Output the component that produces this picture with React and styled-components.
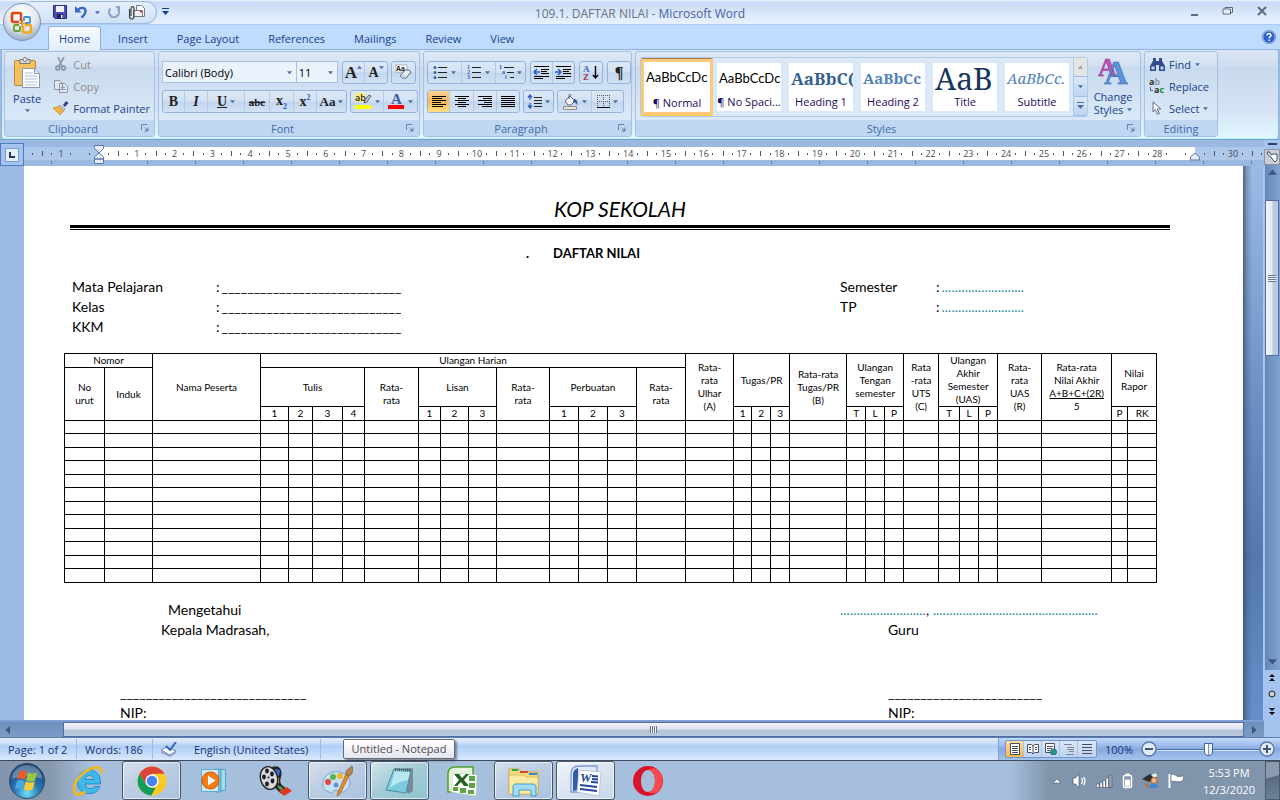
import React, {useState} from 'react';
import styled, {createGlobalStyle} from 'styled-components';

const GlobalStyle = createGlobalStyle`
  *{
    box-sizing: border-box;
    margin: 0;
    padding: 0;
  }

  body{
    font-family: "Open Sans", "Noto Sans", sans-serif;
    font-size: 11px;
    color: #15428b;
    background: #9bbbe3;
  }

  button, select, input{
    font: inherit;
    color: inherit;
    background: none;
    border: 0;
  }

  svg{
    display: block;
    flex: none;
  }
`;

const Window = styled.div`
  height: 100vh;
  display: flex;
  flex-direction: column;
  overflow: hidden;
`;

/* title bar and tabs */

const TitleBar = styled.header`
  height: 25px;
  flex: none;
  display: grid;
  grid-template-columns: 1fr auto 1fr;
  align-items: center;
  background: linear-gradient(#f2f7fe 0, #c9ddf7 2px, #d3e3f9 10px, #dbe9fc 14px, #e9f2fe 24px);
  border-bottom: 1px solid #a9cbf5;

  h1{
    font-size: 12px;
    font-weight: 400;
    color: #4a5fa0;
    padding-top: 2px;

    span{
      color: #6c737c;
    }
  }
`;

const QuickAccess = styled.div`
  display: flex;
  align-items: center;
  padding-left: 30px;

  .pill{
    display: flex;
    align-items: center;
    gap: 7px;
    height: 23px;
    width: 127px;
    padding-left: 23px;
    border: 1px solid #9dbce4;
    border-left: 0;
    border-radius: 0 12px 12px 0;
    background: linear-gradient(#e6f0fd, #cfe0f6);
    margin-right: 5px;
  }
`;

const WindowControls = styled.div`
  display: flex;
  justify-content: flex-end;
  align-items: center;
  gap: 23px;
  padding: 0 13px 2px 0;
`;

const OfficeButton = styled.button`
  position: absolute;
  left: 2px;
  top: 2px;
  width: 40px;
  height: 40px;
  z-index: 2;
`;

const Tabs = styled.nav`
  height: 25px;
  flex: none;
  display: flex;
  align-items: flex-end;
  gap: 5px;
  padding: 0 4px 0 48px;
  background: #bfdbff;
  border-bottom: 1px solid #8db2e3;

  .help{
    margin-left: auto;
    align-self: center;
  }
`;

const Tab = styled.button`
  height: ${p => p.$active ? 24 : 23}px;
  padding: 0 ${p => p.$active ? 10 : 11}px;
  border: 1px solid ${p => p.$active ? '#8db2e3' : 'transparent'};
  border-bottom: 0;
  border-radius: 3px 3px 0 0;
  background: ${p => p.$active ? 'linear-gradient(#f6faff, #e3eefb)' : 'none'};
  margin-bottom: ${p => p.$active ? -1 : 0}px;
`;

/* ribbon */

const Ribbon = styled.section`
  height: 89px;
  flex: none;
  display: flex;
  gap: 3px;
  padding: 1px 2px 1px;
  margin: 0 1px;
  border: 1px solid #8db2e3;
  border-top: 0;
  border-bottom-color: #b6f2fb;
  border-radius: 0 3px 4px 4px;
  background: linear-gradient(#dbe6f4 0, #cfddef 16px, #c9d9ee 17px, #d5e4f4 60px, #e2f6ff 100%);
`;

const GroupBox = styled.div`
  width: ${p => p.$w}px;
  flex: none;
  display: flex;
  flex-direction: column;
  border: 1px solid #a5c2e6;
  border-radius: 3px;
  overflow: hidden;
  background: linear-gradient(#dde8f5 0, #d3e1f2 14px, #c9daee 15px, #d9e9f8 66px);
`;

const GroupBody = styled.div`
  height: 68px;
  display: flex;
  flex-direction: ${p => p.$column ? 'column' : 'row'};
  gap: ${p => p.$column ? 6 : 0}px;
  padding: ${p => p.$column ? '9px 3px 0' : '0'};
`;

const GroupLabel = styled.div`
  flex: 1;
  display: flex;
  align-items: center;
  background: #c0d7f1;
  color: #3e6aaa;

  span{
    flex: 1;
    text-align: center;
  }

  svg{
    margin-right: 5px;
  }
`;

const Row = styled.div`
  display: flex;
  gap: ${p => p.$gap || 3}px;
`;

const Strip = styled.div`
  display: flex;
  height: 23px;
  border: 1px solid #94b4dd;
  border-radius: 3px;
  background: linear-gradient(#dce8f6 0, #d2e1f3 10px, #c3d6ee 11px, #d3e3f5 22px);
`;

const ToolButton = styled.button`
  width: ${p => p.$w || 24}px;
  display: flex;
  align-items: center;
  justify-content: center;
  gap: 3px;
  border-right: 1px solid #b3cbe9;
  background: ${p => p.$on ? 'linear-gradient(#fbd29a, #fbb755 50%, #fde08a)' : 'none'};
  color: #222;
  font-family: "Liberation Serif", serif;
  font-size: ${p => p.$size || 14}px;
  font-weight: ${p => p.$light ? 400 : 700};

  &:last-child{
    border-right: 0;
  }

  sub, sup{
    font-size: 8px;
    line-height: 8px;
    color: #2a5cc0;
  }
`;

const SizeButton = styled(ToolButton)`
  gap: 0;

  svg{
    align-self: flex-start;
    margin-top: 3px;
  }
`;

const Combo = styled.div`
  width: ${p => p.$w}px;
  height: 22px;
  display: flex;
  align-items: center;
  padding: 0 4px 0 2px;
  border: 1px solid #abc1de;
  background: #eaf2fb;
  color: #000;
  margin-right: ${p => p.$last ? 1 : -4}px;

  select{
    flex: 1;
    min-width: 0;
    appearance: none;
    outline: none;
  }
`;

const BigButton = styled.button`
  width: ${p => p.$w}px;
  display: flex;
  flex-direction: column;
  align-items: center;
  padding-top: 5px;
  line-height: 13px;

  svg:first-child{
    margin-bottom: 4px;
  }

  svg:last-child{
    margin-top: 3px;
  }

  .with-arrow{
    display: flex;
    align-items: center;
    gap: 4px;
  }

  .with-arrow svg{
    margin: 0;
  }
`;

const SmallButtons = styled.div`
  display: flex;
  flex-direction: column;
  padding: 1px 4px;

  button{
    height: 22px;
    display: flex;
    align-items: center;
    gap: 4px;
    white-space: nowrap;
  }

  button:disabled{
    color: #8d8d8d;
  }

  .icon{
    width: 16px;
    display: flex;
    justify-content: center;
  }
`;

const Gallery = styled.div`
  height: 60px;
  display: flex;
  margin: 5px 0 0 4px;
  border: 1px solid #b0cbea;
  border-radius: 3px;
  background: #dbe8f8;
`;

const StyleCard = styled.button`
  width: 72px;
  display: flex;
  padding: ${p => p.$active ? '1px 0' : '5px 4px'};
  border-radius: 2px;
  background: ${p => p.$active ? 'linear-gradient(#a47b4d, #f29d3e 12px, #f6b34d 60%, #fbd23f)' : 'none'};

  .sheet{
    flex: 1;
    min-width: 0;
    height: 100%;
    border: ${p => p.$active ? '3px solid #fbc978' : '0'};
    background: #fff;
    display: flex;
    flex-direction: column;
    justify-content: space-between;
    overflow: hidden;
  }

  .sample{
    height: 31px;
    line-height: 31px;
    padding-left: 2px;
    text-align: left;
    white-space: nowrap;
    overflow: hidden;
    color: ${p => p.$color};
    font-family: ${p => p.$font};
    font-size: ${p => p.$size}px;
    font-weight: ${p => p.$bold ? 700 : 400};
    font-style: ${p => p.$italic ? 'italic' : 'normal'};
  }

  .name{
    color: #1b0a5c;
    height: 17px;
    line-height: 15px;
    white-space: nowrap;
  }
`;

const GalleryScroll = styled.div`
  width: 14px;
  display: flex;
  flex-direction: column;
  border-left: 1px solid #b0cbea;

  button{
    flex: 1;
    display: flex;
    flex-direction: column;
    gap: 2px;
    align-items: center;
    justify-content: center;
    background: linear-gradient(#dce8f7, #bdd4f2);
    border-bottom: 1px solid #a0bfe8;
  }

  button:disabled{
    background: #e4e4e4;
  }
`;

/* work area */

const Workspace = styled.div`
  flex: 1;
  min-height: 0;
  display: flex;
  border-top: 1px solid #7d9fd0;
  background: #9bb9e0;
`;

const MainColumn = styled.div`
  flex: 1;
  min-width: 0;
  display: flex;
  flex-direction: column;
`;

const RulerBar = styled.div`
  height: 26px;
  flex: none;
  display: flex;
  padding-top: 3px;
`;

const TabSelector = styled.button`
  width: 24px;
  height: 23px;
  border: 1px solid #4d7bc5;
  background: #a5c3ef;
  display: flex;
  align-items: center;
  justify-content: center;
`;

const Ruler = styled.div`
  flex: 1;
  min-width: 0;
  display: flex;
  height: 23px;
  padding-top: 4px;
  background: repeating-linear-gradient(90deg, transparent 0 27px, #6d7d94 27px 28px, transparent 28px 48px) 0 18px / 100% 3px no-repeat;
`;

const Scale = styled.div`
  height: 13px;
  display: flex;
  width: ${p => p.$w ? `${p.$w}px` : 'auto'};
  flex: ${p => p.$w ? 'none' : 1};
  justify-content: ${p => p.$end ? 'flex-end' : 'flex-start'};
  background: ${p => p.$w ? '#adc8ea' : '#fff'};
  overflow: hidden;
`;

const tick = x => `linear-gradient(#555, #555) ${x} 50% / 1px`;

const Cm = styled.span`
  flex: ${p => p.$fixed ? '0 0 38px' : '1 1 0'};
  text-align: center;
  font-size: 9px;
  line-height: 13px;
  color: #4c4c4c;
  background: ${tick('0')} 5px no-repeat, ${tick('25%')} 2px no-repeat, ${tick('75%')} 2px no-repeat;
`;

const HalfCm = styled.span`
  flex: ${p => p.$fixed ? '0 0 19px' : '1 1 0'};
  max-width: ${p => p.$fixed ? 'none' : 'calc(100% / 58)'};
  background: ${tick('50%')} 2px no-repeat;
`;

const Marker = styled.div`
  width: 0;
  flex: none;
  height: 19px;
  display: flex;
  justify-content: center;
  margin-top: ${p => p.$low ? 2 : -2}px;
  z-index: 1;
`;

const Canvas = styled.div`
  flex: 1;
  min-height: 0;
  display: flex;
  overflow: hidden;
  background: #9bb9e1;
  padding-left: 24px;
`;

const PageEdge = styled.div`
  width: 21px;
  background:
    linear-gradient(90deg, rgba(60, 80, 105, .8) 0, rgba(60, 80, 105, .3) 4px, transparent 9px),
    linear-gradient(#9bbbe6 0, #6a8fc4 240px, #5378ad 390px, #668fcb 100%);
  border-right: 1px solid #a9c8f2;
`;

const Paper = styled.article`
  flex: 1;
  min-width: 0;
  background: #fff;
  color: #000;
  padding: 30px 73px 0 46px;
  font-family: Lato, "Liberation Sans", sans-serif;
  font-size: 14px;
  line-height: 20px;
`;

const Letterhead = styled.h2`
  text-align: center;
  font-size: 21px;
  font-weight: 400;
  font-style: italic;
  line-height: 26px;
  padding-bottom: 3px;
`;

const Rule = styled.div`
  height: 5px;
  border-top: 3px solid #000;
  border-bottom: 1px solid #000;
`;

const DocTitle = styled.h3`
  display: flex;
  justify-content: center;
  gap: 24px;
  margin-top: 13px;
  padding-right: 74px;
  font-size: 13px;
  line-height: 20px;
`;

const Info = styled.div`
  display: grid;
  grid-template-columns: 70% 30%;
  margin-top: 14px;
`;

const Fields = styled.dl`
  display: grid;
  grid-template-columns: ${p => p.$label}px 1fr;
  align-content: start;
  padding-left: ${p => p.$inset || 0}px;
  white-space: nowrap;

  dd{
    display: flex;
    gap: 2px;
  }
`;

const Dots = styled.span`
  color: #2f8ea3;
`;

const Grades = styled.table`
  width: calc(100% - 7px);
  margin: 16px 0 0 -6px;
  table-layout: fixed;
  border-collapse: collapse;
  font-size: 10px;
  line-height: 13px;

  th, td{
    border: 1px solid #000;
    font-weight: 400;
    white-space: nowrap;
  }

  thead tr{
    height: 13px;
  }

  thead tr:nth-child(2){
    height: 39px;
  }

  tbody tr{
    height: 13px;
  }

  tbody tr:nth-child(even){
    height: 14px;
  }
`;

const Signatures = styled.div`
  display: grid;
  grid-template-columns: 70% 30%;
  margin-top: 17px;
  white-space: nowrap;
`;

const SignBlock = styled.div`
  padding-left: ${p => p.$inset}px;

  .head{
    padding-left: 41px;
    text-indent: 7px;
  }

  .line{
    margin-top: 43px;
  }
`;

/* scroll bars */

const HScroll = styled.div`
  height: 17px;
  flex: none;
  display: flex;
  align-items: center;
  border-top: 2px solid #7e9fd3;
  background: linear-gradient(#6d8fbd, #7c9cc6);
  padding-left: 4px;

  .track{
    flex: 1;
    height: 15px;
    padding-left: 51px;
    display: flex;
  }

  .thumb{
    flex: 1;
    display: flex;
    align-items: center;
    justify-content: center;
    border: 1px solid #566b9e;
    background: linear-gradient(#f2f2f8 0, #dfe4ee 6px, #b4c4d8 7px, #b7c8db 100%);
  }

  .end{
    width: 20px;
    display: flex;
    justify-content: center;
  }
`;

const SideBar = styled.aside`
  width: 16px;
  flex: none;
  display: flex;
  flex-direction: column;
  align-items: center;
  background: #a5c3ef;

  .split{
    width: 9px;
    height: 2px;
    margin: 3px 0 4px;
    background: #33415f;
  }

  .toggle{
    width: 16px;
    height: 16px;
    display: flex;
    align-items: center;
    justify-content: center;
    border: 1px solid #8a93a8;
    background: #c9cdd6;
  }

  .track{
    width: 15px;
    flex: 1;
    display: flex;
    flex-direction: column;
    align-items: center;
    padding: 3px 0 4px;
    background: linear-gradient(90deg, #6787b4, #7fa3d0);
  }

  .thumb{
    width: 14px;
    height: 156px;
    margin: 23px 0 auto;
    display: flex;
    align-items: center;
    justify-content: center;
    border: 1px solid #566b9e;
    border-radius: 1px;
    background: linear-gradient(90deg, #f5f7fa 0, #e1e8f1 6px, #b8cae0 7px, #b9cbe0 100%);
  }

  .browse{
    height: 67px;
    display: flex;
    flex-direction: column;
    align-items: center;
    justify-content: space-around;
    padding: 0 0 18px;
  }
`;

const Grip = styled.span`
  width: ${p => p.$vertical ? 8 : 7}px;
  height: 7px;
  background: repeating-linear-gradient(${p => p.$vertical ? 180 : 90}deg, #6d7486 0 1px, #eef1f6 1px 2px);
`;

/* status bar */

const StatusBar = styled.footer`
  height: 23px;
  flex: none;
  display: flex;
  align-items: center;
  color: #15307a;
  border-top: 1px solid #567db1;
  background: linear-gradient(#e3eefd 0, #c6dbf8 6px, #b0cdf5 8px, #d7e6fb 21px);
  position: relative;
`;

const StatusItem = styled.div`
  height: 20px;
  display: flex;
  align-items: center;
  padding: 0 8px;
  width: ${p => p.$w}px;
  gap: 16px;
  border-right: 1px solid #9dbcec;
`;

const ViewArea = styled.div`
  margin-left: auto;
  height: 100%;
  display: flex;
  align-items: center;
  padding: 0 5px 0 6px;
  border-left: 1px solid #7ba0d8;
  background: linear-gradient(#c4dafa, #8db1e4 10px, #86a9dd 11px, #a5c4ee);
`;

const ViewButtons = styled.div`
  display: flex;
  border: 1px solid #6f96cf;
  border-radius: 2px;
  background: linear-gradient(#dae7f9, #bed3f1);
  margin-right: 8px;

  button{
    width: 18px;
    height: 16px;
    display: flex;
    align-items: center;
    justify-content: center;
    border-right: 1px solid #a7c2e8;
  }

  button:first-child{
    background: linear-gradient(#fbdca0, #fbb34a);
  }

  button:last-child{
    border: 0;
  }
`;

const Zoom = styled.div`
  display: flex;
  align-items: center;

  label{
    width: 36px;
  }

  input{
    width: 102px;
    height: 15px;
    appearance: none;
    background: linear-gradient(#4a6fae, #4a6fae) 0 7px / 100% 1px no-repeat, linear-gradient(#dbe8fb, #dbe8fb) 0 8px / 100% 1px no-repeat;
  }

  input::-webkit-slider-thumb{
    appearance: none;
    width: 9px;
    height: 13px;
    border: 1px solid #43649c;
    border-radius: 1px 1px 5px 5px;
    background: linear-gradient(90deg, #fff 0 3px, #7b93bd 3px 4px, #e6edf8 4px);
  }
`;

const Tooltip = styled.div`
  position: absolute;
  left: 343px;
  top: 1px;
  width: 112px;
  height: 20px;
  z-index: 3;
  text-align: center;
  line-height: 18px;
  color: #4c4c4c;
  border: 1px solid #6a6a6a;
  border-radius: 2px;
  background: linear-gradient(#fff, #e4e5f0);
  box-shadow: 2px 2px 2px rgba(40, 50, 70, .5);
`;

/* taskbar */

const Taskbar = styled.div`
  height: 40px;
  flex: none;
  display: flex;
  align-items: stretch;
  gap: 3px;
  border-top: 1px solid #3f4a5a;
  background: linear-gradient(90deg, #8295ac 0, #8798ae 50px, #a6bfdc 90px, #a6bfdc calc(100% - 270px), #8094ab calc(100% - 230px));
`;

const TaskButton = styled.button`
  width: ${p => p.$w || 59}px;
  flex: none;
  display: flex;
  align-items: center;
  justify-content: center;
  border: 1px solid ${p => p.$open ? '#48566b' : 'transparent'};
  border-radius: 3px;
  background: ${p => p.$open ? p.$open : 'none'};
  box-shadow: ${p => p.$open ? 'inset 0 0 0 1px rgba(255, 255, 255, .65)' : 'none'};
`;

const Tray = styled.div`
  margin-left: auto;
  display: flex;
  align-items: center;
  gap: 9px;
  color: #fff;

  time{
    width: 64px;
    margin: 0 0 0 3px;
    text-align: center;
    line-height: 17px;
  }

  .desktop{
    width: 15px;
    height: 100%;
    margin-left: -5px;
    border: 1px solid #4b5a6e;
    background: linear-gradient(165deg, #8c9cb0 40%, #5a6b80 42%, #6f8299);
  }
`;

const Arrow = ({fill = '#4a6fa5', dir = 0, size = 5}) => (
  <svg width={size} height={size} viewBox="0 0 6 6"><path d="M0 1.5h6L3 5z" fill={fill} transform={`rotate(${dir} 3 3)`} /></svg>
);

const Launcher = () => (
  <svg width="8" height="8" viewBox="0 0 8 8" fill="none" stroke="#6385b5"><path d="M.5 6V.5H6M3.5 3.5l3 3M7 3.5V7H3.5" /><path d="M5 5h2v2H5z" fill="#6385b5" stroke="none" /></svg>
);

const OfficeLogo = () => (
  <svg width="40" height="40" viewBox="0 0 40 40">
    <defs>
      <radialGradient id="orb" cx=".5" cy=".3" r=".75">
        <stop offset="0" stopColor="#fff" />
        <stop offset=".55" stopColor="#e3e8ef" />
        <stop offset=".9" stopColor="#9fb0c8" />
        <stop offset="1" stopColor="#e6edf6" />
      </radialGradient>
    </defs>
    <circle cx="20" cy="20" r="18.5" fill="url(#orb)" stroke="#8295b3" />
    <g fill="none" strokeLinejoin="round">
      <rect x="10" y="11" width="9" height="9" rx="1.5" stroke="#dd4b12" strokeWidth="2.600" />
      <rect x="22" y="15" width="6" height="6" rx="1" stroke="#3f8fd6" strokeWidth="1.800" />
      <rect x="12" y="23" width="6" height="6" rx="1" stroke="#62a531" strokeWidth="1.800" />
      <rect x="21" y="23" width="8" height="7.500" rx="1.5" stroke="#f5a81c" strokeWidth="2.600" />
    </g>
    <path d="M17 19h6v5h-6z" fill="#f4efe6" />
    <path d="M20 18v3.500h-2.500" fill="none" stroke="#e0561a" strokeWidth="1.600" />
    <path d="M20 25v-3.500h3" fill="none" stroke="#f0a01e" strokeWidth="1.600" />
  </svg>
);

const SaveIcon = () => (
  <svg width="14" height="14" viewBox="0 0 14 14"><path d="M.5.500h13v13H2l-1.500-1.500z" fill="#4b4fb5" stroke="#2b2d80" /><path d="M3 1h8v6H3z" fill="#eef1fb" /><path d="M4 9h6v4H4z" fill="#20225e" /><path d="M8 10h1.500v3H8z" fill="#fff" /></svg>
);

const UndoIcon = () => (
  <svg width="14" height="14" viewBox="0 0 14 14"><path d="M1 1v6.500h6.500z" fill="#3867c4" /><path d="M3.500 5.500C6 2 11 2 11.500 5.500c.4 3-1.500 5-4 7" fill="none" stroke="#3867c4" strokeWidth="2.400" /></svg>
);

const RedoIcon = () => (
  <svg width="14" height="14" viewBox="0 0 14 14"><path d="M8 1h5v5z" fill="#8ea3c2" /><path d="M11 4A5 5 0 1 1 3.500 3.500" fill="none" stroke="#8ea3c2" strokeWidth="2.200" /></svg>
);

const MailIcon = () => (
  <svg width="17" height="15" viewBox="0 0 17 15"><path d="M8.500.500h5l3 3v8h-8z" fill="#fff" stroke="#777" /><path d="M5.500 5.500h9v6h-9z" fill="#f5f5f5" stroke="#777" /><path d="M12 5.500h2v2h-2z" fill="#d33" /><path d="M1.500 4v7c0 4 4.500 4 4.500 0V3.500c0-2.500-3-2.500-3 0V11" fill="none" stroke="#444" strokeWidth="1.200" /></svg>
);

const HelpIcon = () => (
  <svg width="14" height="14" viewBox="0 0 14 14"><circle cx="7" cy="7" r="6.300" fill="#2c62cf" stroke="#dbe9ff" /><circle cx="7" cy="7" r="6.700" fill="none" stroke="#4167ad" strokeWidth=".6" /><path d="M5 5.500C5 3 9 3 9 5.300 9 6.700 7.200 6.600 7.200 8.300M7.200 9.500V11" stroke="#fff" strokeWidth="1.500" fill="none" /></svg>
);

const PasteIcon = () => (
  <svg width="28" height="31" viewBox="0 0 28 31"><rect x="1.500" y="3.500" width="21" height="25" rx="1.500" fill="#f0c061" stroke="#b98a36" /><path d="M7 2.500h10v4H7z" fill="#d8d8d8" stroke="#777" /><circle cx="12" cy="2.500" r="2" fill="#eee" stroke="#777" /><path d="M9.500 11.500h12l5 5v14h-17z" fill="#fff" stroke="#8497b5" /><path d="M21.500 11.500v5h5" fill="#dfe8f5" stroke="#8497b5" /><path d="M12 16h8M12 19h12M12 22h12M12 25h12M12 28h12" stroke="#a9bbd6" /></svg>
);

const CutIcon = () => (
  <svg width="12" height="14" viewBox="0 0 12 14" fill="none" stroke="#8a93a3" strokeWidth="1.600"><path d="M3 0l4 9M9 0L4 9" /><circle cx="2.800" cy="11" r="1.900" /><circle cx="8.500" cy="11" r="1.900" /></svg>
);

const CopyIcon = () => (
  <svg width="14" height="13" viewBox="0 0 14 13" fill="#e2e7ee" stroke="#8d97a8"><path d="M.5.500h5l3 3v6h-8zM5.500 3.500h5l3 3v6h-8z" /><path d="M7 7.500h4M7 9.500h5" /></svg>
);

const BrushIcon = () => (
  <svg width="16" height="14" viewBox="0 0 16 14"><path d="M10 4l3-4 2.500 2L12 6z" fill="#33418a" /><path d="M7 4l5 4-1.500 2L5.500 6z" fill="#c9ccd6" stroke="#777" strokeWidth=".6" /><path d="M0 7l5.500-1.500 5 4.500L7 14z" fill="#f2b43c" stroke="#b77a1c" strokeWidth=".6" /></svg>
);

const Lines = ({widths, align = 'left', w = 14}) => (
  <svg width={w} height="13" viewBox={`0 0 ${w} 13`}>
    {widths.map((len, i) => {
      const start = align === 'right' ? w - len : align === 'center' ? (w - len) / 2 : 0;
      return <rect key={i} x={start} y={i * 2 + 1} width={len} height="1" fill="#000" />;
    })}
  </svg>
);

const ListIcon = ({kind}) => (
  <svg width="15" height="15" viewBox="0 0 15 15">
    {[2, 7, 12].map((y, i) => {
      const x = kind === 'multi' ? i * 3 : 0;
      return (
        <g key={y}>
          {kind === 'bullet'
            ? <circle cx="2" cy={y + .5} r="1.500" fill="#3a62b5" />
            : <text x={x} y={y + 2} fontSize="6" fontWeight="700" fill="#2f5cb5">{kind === 'multi' ? ['1', 'a', 'i'][i] : i + 1}</text>}
          <path d={`M${x + 5} ${y + .5}H${kind === 'multi' ? 15 : 14}`} stroke="#222" />
        </g>
      );
    })}
  </svg>
);

const IndentIcon = ({out}) => (
  <svg width="17" height="13" viewBox="0 0 17 13"><path d="M1 .500h15M8 3.500h8M8 5.500h6M8 7.500h8M1 10.500h15M1 12.500h9" stroke="#000" /><path d={out ? 'M7 6H1M4 3L1 6l3 3' : 'M0 6h6M3 3l3 3-3 3'} stroke="#2a5cc0" strokeWidth="1.500" fill="none" /></svg>
);

const SortIcon = () => (
  <svg width="16" height="17" viewBox="0 0 16 17"><text x="0" y="8" fontSize="9" fontWeight="700" fill="#3a62b5">A</text><text x="0" y="16" fontSize="9" fontWeight="700" fill="#a0303a">Z</text><path d="M12.500 2v12M10 11l2.500 3 2.500-3" stroke="#000" strokeWidth="1.400" fill="none" /></svg>
);

const SpacingIcon = () => (
  <svg width="15" height="15" viewBox="0 0 15 15"><path d="M3 1v5M1 3.500L3 1l2 2.500M3 9v5M1 11.500L3 14l2-2.500" stroke="#2a5cc0" strokeWidth="1.300" fill="none" /><path d="M7 3.500h8M7 6.500h8M7 9.500h8M7 12.500h8" stroke="#222" /></svg>
);

const BucketIcon = () => (
  <svg width="17" height="16" viewBox="0 0 17 16"><path d="M3 7l5-5 5 5-4 4H6z" fill="#f4f6fa" stroke="#53627c" /><path d="M7 5V1.500c0-1.500 2-1.500 2 0" fill="none" stroke="#53627c" /><path d="M12 5c3 0 4 3 3 6-1-2-2-3-4-3z" fill="#2f5ca8" /><path d="M1.500 12.500h13v3h-13z" fill="#e9e5d8" stroke="#8f8f8f" /></svg>
);

const BordersIcon = () => (
  <svg width="13" height="13" viewBox="0 0 13 13"><path d="M.5 0v12M6.500 0v12M12.500 0v12M0 .500h13M0 6.500h13" stroke="#555" strokeDasharray="1 1" /><path d="M0 12.500h13" stroke="#000" /></svg>
);

const HighlightIcon = () => (
  <svg width="17" height="17" viewBox="0 0 17 17"><path d="M0 0h10v9H0z" fill="#f4f27a" /><text x="0" y="8" fontFamily="Open Sans" fontSize="9" fontWeight="600" fill="#222">ab</text><path d="M14 2l2 1-4 6-3 1 1-3z" fill="#bdc8da" stroke="#444" strokeWidth=".8" /><path d="M0 12h16v4H0z" fill="#ff0" /></svg>
);

const FontColorIcon = () => (
  <svg width="17" height="17" viewBox="0 0 17 17"><text x="3" y="11" fontFamily="Liberation Serif" fontSize="15" fontWeight="700" fill="#3a5ca8">A</text><path d="M0 12h16v4H0z" fill="#f00" /></svg>
);

const EraserIcon = () => (
  <svg width="17" height="17" viewBox="0 0 17 17"><path d="M0 1h12v7H0z" fill="#fff" stroke="#888" strokeWidth=".6" /><text x="1" y="7" fontFamily="Open Sans" fontSize="7" fontWeight="700" fill="#222">Aa</text><path d="M5 12l5-6h4l2 2-5 6H7z" fill="#eceff5" stroke="#53627c" /><path d="M5 12l2 2h4l-2-3z" fill="#b9c4d6" /></svg>
);

const ChangeStylesIcon = () => (
  <svg width="30" height="29" viewBox="0 0 30 29"><text x="0" y="19" fontFamily="Liberation Serif" fontSize="26" fontWeight="700" fill="#c254b5" stroke="#8c2e86" strokeWidth=".5">A</text><text x="6" y="27" fontFamily="Liberation Serif" fontSize="33" fontWeight="700" fill="#5c93dc" stroke="#2d5ba8" strokeWidth=".5">A</text></svg>
);

const FindIcon = () => (
  <svg width="15" height="13" viewBox="0 0 15 13"><path d="M3 0h3v3h3V0h3v3l3 5v5H9V7H6v6H0V8l3-5z" fill="#2f4c8c" /><path d="M1.500 8.500h3v3h-3zM10.500 8.500h3v3h-3z" fill="#c6d5ee" /></svg>
);

const ReplaceIcon = () => (
  <svg width="16" height="16" viewBox="0 0 16 16"><text x="0" y="7" fontSize="9" fontWeight="700" fill="#333">a<tspan fill="#999">b</tspan></text><text x="5" y="15" fontSize="9" fontWeight="700" fill="#333">a<tspan fill="#1c8a2a">c</tspan></text><path d="M1.500 9v3.500H4" stroke="#3a62b5" fill="none" /></svg>
);

const SelectIcon = () => (
  <svg width="10" height="14" viewBox="0 0 10 14"><path d="M1 .800v10l2.500-2.300 2 4.700 1.800-.8-2-4.500h3.500z" fill="#fff" stroke="#4a5c7c" strokeWidth=".9" /></svg>
);

const IndentMarker = ({right}) => (
  <svg width="10" height="19" viewBox="0 0 10 19" fill="#e8eefa" stroke="#5c7ab0">
    {!right && <path d="M.5.500h9v3L5 8 .5 3.500z" />}
    {right ? <path d="M5 4l4.500 4v3h-9V8z" /> : <path d="M5 8l4.500 4v2h-9v-2zM.5 14h9v4.500h-9z" />}
  </svg>
);

const ViewIcon = ({kind}) => (
  <svg width="12" height="12" viewBox="0 0 12 12" fill="none" stroke="#4a4f5e">
    {kind === 0 && <path d="M1.500.500h9v11h-9zM3 3.500h6M3 5.500h6M3 7.500h6M3 9.500h6" fill="#fff" />}
    {kind === 1 && <path d="M.5 1.500h4L6 3l1.500-1.500h4v8h-4L6 11 4.500 9.500h-4zM6 3v8M2 4.500h2M2 6.500h2M8 4.500h2M8 6.500h2" fill="#fff" />}
    {kind === 2 && <g><path d="M.5.500h9v9h-9zM2 3.500h6M2 5.500h5M2 7.500h3" fill="#fff" /><circle cx="8.500" cy="9" r="3" fill="#2e9b6a" stroke="#1f6aa5" /></g>}
    {kind === 3 && <path d="M1 1.500h8M4 4.500h7M4 6.500h7M6 8.500h5M3 11.500h8" stroke="#7b8494" />}
    {kind === 4 && <path d="M1 1.500h10M1 4.500h10M1 7.500h10M1 10.500h10" />}
  </svg>
);

const ZoomSign = ({plus}) => (
  <svg width="16" height="16" viewBox="0 0 16 16"><circle cx="8" cy="8" r="7" fill="#e3ecf9" stroke="#5574a8" strokeWidth="1.300" /><path d={plus ? 'M4 8h8M8 4v8' : 'M4 8h8'} stroke="#3f5680" strokeWidth="2" /></svg>
);

const SpellIcon = () => (
  <svg width="17" height="15" viewBox="0 0 17 15"><path d="M0 8l6-3 9 4-6 4z" fill="#fff" stroke="#6d84b2" /><path d="M0 9v2l9 4 6-4V9l-6 4z" fill="#8fa5cf" /><path d="M5 4l4 4 6-8" fill="none" stroke="#3766b8" strokeWidth="2" /></svg>
);

const StartOrb = () => (
  <svg width="38" height="38" viewBox="0 0 38 38">
    <defs>
      <radialGradient id="start" cx=".5" cy=".85" r=".8"><stop offset="0" stopColor="#6fe0f5" /><stop offset=".45" stopColor="#2a78b5" /><stop offset="1" stopColor="#173f70" /></radialGradient>
    </defs>
    <circle cx="19" cy="19" r="17.500" fill="url(#start)" stroke="#2c4a6c" />
    <path d="M4 17a15 14 0 0 1 30 0c-8-4-22-4-30 0z" fill="#fff" opacity=".3" />
    <path d="M11 10c3-2 5-2 8 0l-2 8c-3-2-5-2-8 0z" fill="#ea5b2b" />
    <path d="M20 10.500c3 1.500 5 1.500 9 0l-2 8c-4 1.500-6 1.500-9 0z" fill="#9aca3c" />
    <path d="M8.700 19.500c3-2 5-2 8 0l-2 8c-3-2-5-2-8 0z" fill="#4aa8e8" />
    <path d="M17.700 19.500c3 1.500 5 1.500 9 0l-2 8c-4 1.500-6 1.500-9 0z" fill="#fccb35" />
  </svg>
);

const IeIcon = () => (
  <svg width="32" height="32" viewBox="0 0 32 32">
    <path fillRule="evenodd" d="M17 5c7 0 12 5 11.500 14H13c.5 5 7 6 9.500 2.500h5.500C25 32 6 31 5.500 18 5.500 10 10 5 17 5zM13 14.500h9c-.5-5-8-5.500-9 0z" fill="#3fb9ea" stroke="#1b7fc0" strokeWidth=".8" />
    <path d="M29.500 8.500C30.500 2 25 1 18 4 8 8.500 0 20 2.500 27c1.500 4 7 2.500 11-.5" fill="none" stroke="#f2b91b" strokeWidth="2.600" />
  </svg>
);

const ChromeIcon = () => (
  <svg width="30" height="30" viewBox="0 0 30 30">
    <circle cx="15" cy="15" r="14.500" fill="#fbc926" />
    <path d="M2.500 7.800A14.500 14.500 0 0 1 27.600 7.800H15L9 18.500z" fill="#db4437" />
    <path d="M2.500 7.800L8.900 18.500 15 21.500l3.500.5L14.200 29.500A14.500 14.500 0 0 1 2.500 7.800z" fill="#109d58" />
    <circle cx="15" cy="15" r="6.700" fill="#f5f7fa" /><circle cx="15" cy="15" r="5.200" fill="#4285f4" />
  </svg>
);

const PlayerIcon = () => (
  <svg width="30" height="28" viewBox="0 0 30 28"><path d="M18 2.500h8.500v21H18z" fill="#a5dcf0" stroke="#4ba3cc" /><path d="M16 2h6v23h-6z" fill="#79c0e2" stroke="#4ba3cc" /><path d="M2.500 2.500h17v22h-17z" fill="#cfe9f5" stroke="#6aa8ca" /><circle cx="11.500" cy="13.500" r="8.500" fill="#f57c14" stroke="#c95b06" /><path d="M9 8.500l7.500 5L9 18.500z" fill="#fff" /></svg>
);

const MovieIcon = () => (
  <svg width="34" height="32" viewBox="0 0 34 32">
    <path d="M13 2c8-3 11 4 9 10s0 8 6 12l-5 5c-7-5-10-10-9-16z" fill="#26272d" />
    <path d="M16 4l5 1-1 6-5-2z" fill="#3b68d0" /><path d="M15 12l5 1v5l-4-1z" fill="#f2c21c" /><path d="M18 20l5 2 2 4-5-2z" fill="#57a83c" /><path d="M20 26l8-4 5 4-8 5z" fill="#dd3a1c" />
    <ellipse cx="10" cy="13" rx="8.500" ry="11.500" fill="#d6d8dc" stroke="#222" strokeWidth="1.400" transform="rotate(-14 10 13)" />
    {[[8, 6], [13, 9], [5, 12], [13.500, 16], [8, 19]].map(([x, y]) => <ellipse key={`${x}-${y}`} cx={x} cy={y} rx="1.900" ry="2.400" fill="#1d1d22" />)}
    <circle cx="9.500" cy="12.500" r="1" fill="#1d1d22" />
  </svg>
);

const PaintIcon = () => (
  <svg width="34" height="32" viewBox="0 0 34 32">
    <path d="M2 20C1 10 12 4 22 8c9 4 9 13 2 18-4 3-6-1-9-1s-3 4-7 2c-3-1-6-3-6-7z" fill="#c8e2f3" stroke="#77a9cc" />
    <circle cx="7" cy="17" r="3" fill="#e04848" /><circle cx="12" cy="12" r="3" fill="#5ab54a" /><circle cx="19" cy="11" r="3" fill="#f0b428" /><circle cx="15" cy="20" r="2.500" fill="#5c95d8" />
    <path d="M25 9l3 2-9 18-3 2 1-4z" fill="#e38b30" stroke="#a95e17" strokeWidth=".7" /><path d="M25 9c-1-4 3-5 6-8 1 4 1 8-3 10z" fill="#b98352" stroke="#7c5127" strokeWidth=".7" />
  </svg>
);

const NotepadIcon = () => (
  <svg width="34" height="32" viewBox="0 0 34 32"><path d="M13 4l17-1v23l-5 3z" fill="#7b8c94" /><path d="M11 4l17 1-5 23-20-3z" fill="#7ccbdc" stroke="#458fa5" /><path d="M12 6l15 1-2 8c-6 1-12 3-18 8z" fill="#c5edf5" opacity=".8" /><path d="M12 4.500l16 1" stroke="#555" strokeWidth="3" strokeDasharray="1 1" /></svg>
);

const ExcelIcon = () => (
  <svg width="32" height="32" viewBox="0 0 32 32"><path d="M2 27V9C2 4 5 2 9 2h18v24z" fill="#e6f3df" stroke="#4ea32c" strokeWidth="1.500" /><path d="M7 8l24 2-1 21-25-4z" fill="#fff" stroke="#c7d4c0" strokeWidth=".6" /><path d="M23 11h6v5h-6zM23 18h6v5h-6zM22 25h6v4h-6zM14 23h6v5h-6zM7 22h5v4H7z" fill="#5ea545" /><path d="M8 9h5l3 4 4-4h3l-5 6 5 6h-5l-3-4-4 4H8l5-6z" fill="#22641f" /></svg>
);

const FolderIcon = () => (
  <svg width="34" height="32" viewBox="0 0 34 32"><path d="M2 4h10l2 3h17v22H2z" fill="#f3da7e" stroke="#c6a545" /><path d="M5 4h6v2H5z" fill="#31a843" /><path d="M13 6h8v2h-8z" fill="#d64a35" /><path d="M22 8h8v2h-8z" fill="#2e86d0" /><path d="M2 10h15l2 2h12v17H2z" fill="#fae9a2" stroke="#d2b355" strokeWidth=".7" /><path d="M6 31V22c0-2 1-3 3-3h17c2 0 3 1 3 3v9h-5v-6H12v6z" fill="#9fdcf5" stroke="#3f9cc9" /></svg>
);

const WordIcon = () => (
  <svg width="32" height="32" viewBox="0 0 32 32"><path d="M1 27V9C1 4 4 1 9 1h18v6H10v20z" fill="#dfe8f8" stroke="#7b9ad3" strokeWidth="1.300" /><path d="M3 26V9c0-3 2-5 5-6v22z" fill="#2f5cab" /><path d="M9 5l22 2-2 24-22-4z" fill="#fff" stroke="#a9b7cf" strokeWidth=".7" /><text x="10" y="17" fontFamily="Liberation Serif" fontStyle="italic" fontWeight="700" fontSize="13" fill="#24479b">W</text><path d="M22 11l6 .5M22 14l6 .5M21 17l7 .5M10 20l17 2M10 24l17 2" stroke="#24479b" strokeWidth="1.800" /></svg>
);

const OperaIcon = () => (
  <svg width="32" height="32" viewBox="0 0 32 32"><path fillRule="evenodd" d="M16 1a15 15 0 1 0 0 30 15 15 0 0 0 0-30zM16 5c4.500 0 7 5 7 11s-2.500 11-7 11-7-5-7-11 2.500-11 7-11z" fill="#d8142a" /><path d="M16 5c4.500 0 7 5 7 11s-2.500 11-7 11c3 2 7 2 10-.5A15 15 0 0 0 26 5c-3-2.500-7-2-10 0z" fill="#f94a4f" /></svg>
);

const TrayIcons = () => (
  <>
    <svg width="10" height="6" viewBox="0 0 10 6"><path d="M1 5l4-4 4 4z" fill="#fff" stroke="#48566b" strokeWidth=".6" /></svg>
    <svg width="16" height="16" viewBox="0 0 16 16" fill="#fff" stroke="#48566b" strokeWidth=".7"><path d="M2 5h2.500L8 1v14l-3.500-4H2z" /><path d="M10.500 5q2 3 0 6M12.500 4q3 4 0 8" fill="none" stroke="#fff" strokeWidth="1.300" /></svg>
    <svg width="17" height="14" viewBox="0 0 17 14" fill="#fff" stroke="#48566b" strokeWidth=".6"><path d="M.5 10h2.500v3.500H.5zM4 8.500h2.500v5H4zM7 6.500h2.500v7H7zM10 4h2.500v9.500H10z" /><path d="M13 1h3v12.500h-3z" fill="#99a7b8" /></svg>
    <svg width="11" height="16" viewBox="0 0 11 16" fill="none" stroke="#fff"><path d="M3.500 1.500h4" strokeWidth="2" /><rect x="1.500" y="2.500" width="8" height="12" rx="1.500" strokeWidth="1.500" /><path d="M3.500 7h4v6h-4z" fill="#fff" /></svg>
    <svg width="17" height="16" viewBox="0 0 17 16"><path d="M0 6l8-5 6 3-7 5z" fill="#2c2f33" /><path d="M9 2l5-2 1 3-3 2z" fill="#eee" /><circle cx="12" cy="7.500" r="3" fill="#f1b987" stroke="#b85f1e" /><path d="M7 15c0-6 9-6 9 0z" fill="#3f87d0" /><path d="M2 9l6 4-4 2z" fill="#a9774a" /></svg>
    <svg width="17" height="16" viewBox="0 0 17 16"><path d="M1.500 1v14" stroke="#fff" strokeWidth="2" /><path d="M3 1.500c4-1 5 2 7 2s4 0 6-1c-1 3 0 5-3 6s-7-1-10 0z" fill="#fff" stroke="#48566b" strokeWidth=".6" /></svg>
  </>
);

const styleCards = [
  {name: '¶ Normal', sample: 'AaBbCcDc', color: '#000', size: 13, active: true},
  {name: '¶ No Spaci...', sample: 'AaBbCcDc', color: '#000', size: 13},
  {name: 'Heading 1', sample: 'AaBbC(', color: '#365f91', size: 17, serif: true, bold: true},
  {name: 'Heading 2', sample: 'AaBbCc', color: '#4f81bd', size: 15, serif: true, bold: true},
  {name: 'Title', sample: 'AaB', color: '#17365d', size: 30, serif: true},
  {name: 'Subtitle', sample: 'AaBbCc.', color: '#4f81bd', size: 15, serif: true, italic: true},
];

const columns = [40, 48, 108, 28, 24, 30, 22, 54, 22, 28, 28, 53, 29, 29, 29, 49, 48, 18, 19, 19, 57, 19, 19, 19, 35, 21, 19, 19, 44, 70, 16, 29];

const tabs = ['Home', 'Insert', 'Page Layout', 'References', 'Mailings', 'Review', 'View'];

const glass = 'linear-gradient(150deg, #d6dfec, #bccde3 45%, #a9c1e0)';

const Lined = ({text}) => text.split('\n').map((line, i) => <React.Fragment key={i}>{i > 0 && <br />}{line}</React.Fragment>);

const GradeTable = () => (
  <Grades>
    <colgroup>{columns.map((w, i) => <col key={i} style={{width: w}} />)}</colgroup>
    <thead>
      <tr>
        <th colSpan="2">Nomor</th>
        <th rowSpan="3">Nama Peserta</th>
        <th colSpan="13">Ulangan Harian</th>
        <th rowSpan="3"><Lined text={'Rata-\nrata\nUlhar\n(A)'} /></th>
        <th rowSpan="2" colSpan="3">Tugas/PR</th>
        <th rowSpan="3"><Lined text={'Rata-rata\nTugas/PR\n(B)'} /></th>
        <th rowSpan="2" colSpan="3"><Lined text={'Ulangan\nTengan\nsemester'} /></th>
        <th rowSpan="3"><Lined text={'Rata\n-rata\nUTS\n(C)'} /></th>
        <th rowSpan="2" colSpan="3"><Lined text={'Ulangan\nAkhir\nSemester\n(UAS)'} /></th>
        <th rowSpan="3"><Lined text={'Rata-\nrata\nUAS\n(R)'} /></th>
        <th rowSpan="3">Rata-rata<br />Nilai Akhir<br /><u>A+B+C+(2R)</u><br />5</th>
        <th rowSpan="2" colSpan="2"><Lined text={'Nilai\nRapor'} /></th>
      </tr>
      <tr>
        <th rowSpan="2"><Lined text={'No\nurut'} /></th>
        <th rowSpan="2">Induk</th>
        <th colSpan="4">Tulis</th>
        <th rowSpan="2"><Lined text={'Rata-\nrata'} /></th>
        <th colSpan="3">Lisan</th>
        <th rowSpan="2"><Lined text={'Rata-\nrata'} /></th>
        <th colSpan="3">Perbuatan</th>
        <th rowSpan="2"><Lined text={'Rata-\nrata'} /></th>
      </tr>
      <tr>
        {['1', '2', '3', '4', '1', '2', '3', '1', '2', '3', '1', '2', '3', 'T', 'L', 'P', 'T', 'L', 'P', 'P', 'RK'].map((label, i) => <th key={i}>{label}</th>)}
      </tr>
    </thead>
    <tbody>
      {Array.from({length: 12}, (_, r) => <tr key={r}>{columns.map((_, c) => <td key={c} />)}</tr>)}
    </tbody>
  </Grades>
);

const Blank = ({n}) => <span>{'_'.repeat(n)}</span>;

const App = () => {
  const [tab, setTab] = useState('Home');
  const [zoom, setZoom] = useState(100);

  return (
    <Window>
      <GlobalStyle />
      <OfficeButton aria-label="Office Button"><OfficeLogo /></OfficeButton>
      <TitleBar>
        <QuickAccess>
          <div className="pill">
            <SaveIcon /><UndoIcon /><Arrow /><RedoIcon /><MailIcon />
          </div>
          <svg width="7" height="8" viewBox="0 0 7 8"><path d="M0 .500h7" stroke="#15428b" /><path d="M0 3h7L3.500 7z" fill="#15428b" /></svg>
        </QuickAccess>
        <h1><span>109.1. DAFTAR NILAI - </span>Microsoft Word</h1>
        <WindowControls>
          <svg width="10" height="10" viewBox="0 0 10 10"><path d="M2 9h7" stroke="#5b6a82" strokeWidth="2" /></svg>
          <svg width="12" height="10" viewBox="0 0 12 10" fill="#e9f2fe" stroke="#5b6a82"><path d="M3 1.500h7.500v5H3z" /><path d="M1 3h7.500v5H1z" /></svg>
          <svg width="10" height="10" viewBox="0 0 10 10"><path d="M1 1l8 8M9 1L1 9" stroke="#5b6a82" strokeWidth="2" /></svg>
        </WindowControls>
      </TitleBar>

      <Tabs>
        {tabs.map(t => <Tab key={t} $active={t === tab} onClick={() => setTab(t)}>{t}</Tab>)}
        <button className="help" aria-label="Help"><HelpIcon /></button>
      </Tabs>

      <Ribbon>
        <GroupBox $w={151}>
          <GroupBody>
            <BigButton $w={47}><PasteIcon />Paste<Arrow /></BigButton>
            <SmallButtons>
              <button disabled><span className="icon"><CutIcon /></span>Cut</button>
              <button disabled><span className="icon"><CopyIcon /></span>Copy</button>
              <button><span className="icon"><BrushIcon /></span>Format Painter</button>
            </SmallButtons>
          </GroupBody>
          <GroupLabel><span>Clipboard</span><Launcher /></GroupLabel>
        </GroupBox>

        <GroupBox $w={262}>
          <GroupBody $column>
            <Row>
              <Combo $w={137}><select aria-label="Font"><option>Calibri (Body)</option></select><Arrow /></Combo>
              <Combo $w={43} $last><select aria-label="Font size"><option>11</option></select><Arrow /></Combo>
              <Strip>
                <SizeButton $w={22} $size={17}>A<Arrow dir={180} /></SizeButton>
                <SizeButton $w={22} $size={14}>A<Arrow /></SizeButton>
              </Strip>
              <Strip><ToolButton $w={23} aria-label="Clear formatting"><EraserIcon /></ToolButton></Strip>
            </Row>
            <Row>
              <Strip>
                <ToolButton $w={22}>B</ToolButton>
                <ToolButton $w={23}><i>I</i></ToolButton>
                <ToolButton $w={37}><u>U</u><Arrow /></ToolButton>
                <ToolButton $w={25} $size={11}><s>abc</s></ToolButton>
                <ToolButton $w={24}><span>x<sub>2</sub></span></ToolButton>
                <ToolButton $w={23}><span>x<sup>2</sup></span></ToolButton>
                <ToolButton $w={29} $size={13}>Aa<Arrow /></ToolButton>
              </Strip>
              <Strip>
                <ToolButton $w={33} aria-label="Highlight"><HighlightIcon /><Arrow /></ToolButton>
                <ToolButton $w={33} aria-label="Font colour"><FontColorIcon /><Arrow /></ToolButton>
              </Strip>
            </Row>
          </GroupBody>
          <GroupLabel><span>Font</span><Launcher /></GroupLabel>
        </GroupBox>

        <GroupBox $w={209}>
          <GroupBody $column>
            <Row $gap={4}>
              <Strip>
                <ToolButton $w={34} aria-label="Bullets"><ListIcon kind="bullet" /><Arrow /></ToolButton>
                <ToolButton $w={34} aria-label="Numbering"><ListIcon kind="number" /><Arrow /></ToolButton>
                <ToolButton $w={29} aria-label="Multilevel list"><ListIcon kind="multi" /><Arrow /></ToolButton>
              </Strip>
              <Strip>
                <ToolButton $w={22} aria-label="Decrease indent"><IndentIcon out /></ToolButton>
                <ToolButton $w={21} aria-label="Increase indent"><IndentIcon /></ToolButton>
              </Strip>
              <Strip><ToolButton $w={22} aria-label="Sort"><SortIcon /></ToolButton></Strip>
              <Strip><ToolButton $w={22} $size={16}>¶</ToolButton></Strip>
            </Row>
            <Row>
              <Strip>
                <ToolButton $w={22} $on aria-label="Align left"><Lines widths={[14, 10, 14, 9, 14, 11]} /></ToolButton>
                <ToolButton $w={24} aria-label="Center"><Lines widths={[14, 8, 14, 8, 14, 8]} align="center" /></ToolButton>
                <ToolButton $w={23} aria-label="Align right"><Lines widths={[14, 9, 14, 8, 14, 10]} align="right" /></ToolButton>
                <ToolButton $w={22} aria-label="Justify"><Lines widths={[14, 14, 14, 14, 14, 14]} /></ToolButton>
              </Strip>
              <Strip><ToolButton $w={29} aria-label="Line spacing"><SpacingIcon /><Arrow /></ToolButton></Strip>
              <Strip>
                <ToolButton $w={34} aria-label="Shading"><BucketIcon /><Arrow /></ToolButton>
                <ToolButton $w={31} aria-label="Borders"><BordersIcon /><Arrow /></ToolButton>
              </Strip>
            </Row>
          </GroupBody>
          <GroupLabel><span>Paragraph</span><Launcher /></GroupLabel>
        </GroupBox>

        <GroupBox $w={506}>
          <GroupBody>
            <Gallery>
              {styleCards.map(s => (
                <StyleCard
                  key={s.name}
                  $active={s.active}
                  $color={s.color}
                  $size={s.size}
                  $bold={s.bold}
                  $italic={s.italic}
                  $font={s.serif ? '"Noto Serif", "DejaVu Serif", "Liberation Serif", serif' : 'Lato, sans-serif'}
                >
                  <div className="sheet">
                    <span className="sample">{s.sample}</span>
                    <span className="name">{s.name}</span>
                  </div>
                </StyleCard>
              ))}
              <GalleryScroll>
                <button disabled aria-label="Row up"><Arrow dir={180} fill="#999" /></button>
                <button aria-label="Row down"><Arrow /></button>
                <button aria-label="More styles"><svg width="7" height="7" viewBox="0 0 7 7"><path d="M0 .500h7" stroke="#4a6fa5" /><path d="M0 3h7L3.500 7z" fill="#4a6fa5" /></svg></button>
              </GalleryScroll>
            </Gallery>
            <BigButton $w={50}>
              <ChangeStylesIcon />
              Change
              <span className="with-arrow">Styles<Arrow /></span>
            </BigButton>
          </GroupBody>
          <GroupLabel><span>Styles</span><Launcher /></GroupLabel>
        </GroupBox>

        <GroupBox $w={74}>
          <GroupBody>
            <SmallButtons>
              <button><span className="icon"><FindIcon /></span>Find<Arrow /></button>
              <button><span className="icon"><ReplaceIcon /></span>Replace</button>
              <button><span className="icon"><SelectIcon /></span>Select<Arrow /></button>
            </SmallButtons>
          </GroupBody>
          <GroupLabel><span>Editing</span></GroupLabel>
        </GroupBox>
      </Ribbon>

      <Workspace>
        <MainColumn>
          <RulerBar>
            <TabSelector aria-label="Tab selector">
              <svg width="14" height="14" viewBox="0 0 14 14"><path d="M.5.500h13v13H.5z" fill="#e6eefb" stroke="#7d9fd0" /><path d="M5 4v5h5" stroke="#26365c" strokeWidth="2" fill="none" /></svg>
            </TabSelector>
            <Ruler>
              <Scale $w={75} $end><Cm $fixed /><Cm $fixed>1</Cm><HalfCm $fixed /></Scale>
              <Marker><IndentMarker /></Marker>
              <Scale>
                <HalfCm />
                {Array.from({length: 28}, (_, i) => <Cm key={i}>{i + 1}</Cm>)}
                <HalfCm />
              </Scale>
              <Marker $low><IndentMarker right /></Marker>
              <Scale $w={69}><HalfCm $fixed /><Cm $fixed>30</Cm><Cm $fixed /></Scale>
            </Ruler>
          </RulerBar>

          <Canvas>
            <Paper>
              <Letterhead>KOP SEKOLAH</Letterhead>
              <Rule />
              <DocTitle><span>.</span>DAFTAR NILAI</DocTitle>
              <Info>
                <Fields $label={144} $inset={2}>
                  <dt>Mata Pelajaran</dt><dd>:<Blank n={28} /></dd>
                  <dt>Kelas</dt><dd>:<Blank n={28} /></dd>
                  <dt>KKM</dt><dd>:<Blank n={28} /></dd>
                </Fields>
                <Fields $label={96}>
                  <dt>Semester</dt><dd>:<Dots>.........................</Dots></dd>
                  <dt>TP</dt><dd>:<Dots>.........................</Dots></dd>
                </Fields>
              </Info>
              <GradeTable />
              <Signatures>
                <SignBlock $inset={50}>
                  <div className="head">Mengetahui<br />Kepala Madrasah,</div>
                  <div className="line"><Blank n={29} /></div>
                  <div>NIP:</div>
                </SignBlock>
                <div>
                  <Dots>..........................</Dots>, <Dots>..................................................</Dots>
                  <SignBlock $inset={48}>
                    <div>Guru</div>
                    <div className="line"><Blank n={24} /></div>
                    <div>NIP:</div>
                  </SignBlock>
                </div>
              </Signatures>
            </Paper>
            <PageEdge />
          </Canvas>

          <HScroll>
            <Arrow dir={90} fill="#3f5580" size={8} />
            <div className="track"><div className="thumb"><Grip /></div></div>
            <div className="end"><Arrow dir={-90} fill="#3f5580" size={8} /></div>
          </HScroll>
        </MainColumn>

        <SideBar>
          <div className="split" />
          <button className="toggle" aria-label="View ruler">
            <svg width="12" height="12" viewBox="0 0 12 12"><path d="M1 1h3v2l2 1 1-1h4v6l-2 2-2-2-2-3-3-2z" fill="#fff" stroke="#44506a" /></svg>
          </button>
          <div className="track">
            <Arrow dir={180} fill="#3f5580" size={9} />
            <div className="thumb"><Grip $vertical /></div>
            <Arrow fill="#3f5580" size={9} />
          </div>
          <div className="browse">
            <svg width="6" height="8" viewBox="0 0 6 8"><path d="M3 0l3 3H0zM3 4l3 3H0z" fill="#000" /></svg>
            <svg width="8" height="8" viewBox="0 0 8 8"><circle cx="4" cy="4" r="3" fill="#ccc" stroke="#222" /></svg>
            <svg width="6" height="8" viewBox="0 0 6 8"><path d="M0 1h6L3 4zM0 5h6L3 8z" fill="#000" /></svg>
          </div>
        </SideBar>
      </Workspace>

      <StatusBar>
        <StatusItem $w={77}>Page: 1 of 2</StatusItem>
        <StatusItem $w={76}>Words: 186</StatusItem>
        <StatusItem $w={168}><SpellIcon />English (United States)</StatusItem>
        <Tooltip role="tooltip">Untitled - Notepad</Tooltip>
        <ViewArea>
          <ViewButtons>
            {['Print layout', 'Reading', 'Web layout', 'Outline', 'Draft'].map((v, i) => <button key={v} aria-label={v}><ViewIcon kind={i} /></button>)}
          </ViewButtons>
          <Zoom>
            <label htmlFor="zoom">{zoom}%</label>
            <ZoomSign />
            <input id="zoom" type="range" min="0" max="200" value={zoom} onChange={e => setZoom(Number(e.target.value))} />
            <ZoomSign plus />
          </Zoom>
        </ViewArea>
      </StatusBar>

      <Taskbar>
        <TaskButton $w={53} aria-label="Start"><StartOrb /></TaskButton>
        <TaskButton $w={63} aria-label="Internet Explorer"><IeIcon /></TaskButton>
        <TaskButton $open={glass} aria-label="Chrome"><ChromeIcon /></TaskButton>
        <TaskButton aria-label="Media Player"><PlayerIcon /></TaskButton>
        <TaskButton aria-label="Movie Maker"><MovieIcon /></TaskButton>
        <TaskButton $open={glass} aria-label="Paint"><PaintIcon /></TaskButton>
        <TaskButton $open="linear-gradient(150deg, #d2e3ea, #a3cbd6 50%, #8fc4cf)" aria-label="Notepad"><NotepadIcon /></TaskButton>
        <TaskButton aria-label="Excel"><ExcelIcon /></TaskButton>
        <TaskButton $open={glass} aria-label="Explorer"><FolderIcon /></TaskButton>
        <TaskButton $open="linear-gradient(150deg, #f2f5f9, #dce5f0 45%, #c8d7ea)" aria-label="Word"><WordIcon /></TaskButton>
        <TaskButton aria-label="Opera"><OperaIcon /></TaskButton>
        <Tray>
          <TrayIcons />
          <time>5:53 PM<br />12/3/2020</time>
          <button className="desktop" aria-label="Show desktop" />
        </Tray>
      </Taskbar>
    </Window>
  );
};

export default App;
